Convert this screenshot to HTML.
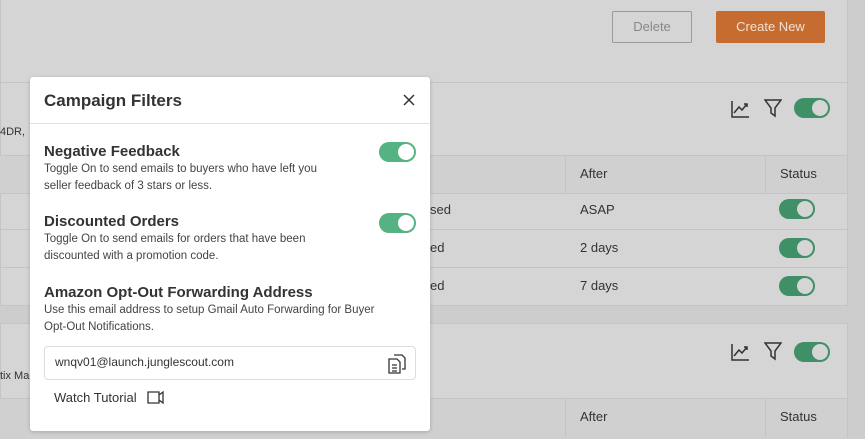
<!DOCTYPE html><html><head><style>
body{margin:0;width:865px;height:433px;background:#cdcdcd;font-family:"Liberation Sans",sans-serif;position:relative;overflow:hidden;color:#333}
.a{position:absolute}
.panel{position:absolute;left:0;width:848px;background:#d5d5d5;border:1px solid #c4c4c4;box-sizing:border-box}
.tg{position:absolute;width:36px;height:20px;border-radius:10px;background:#3f8f67}
.tg:after{content:"";position:absolute;right:2px;top:2px;width:16px;height:16px;border-radius:50%;background:#d5d5d5}
.mt{position:absolute;width:37px;height:20px;border-radius:10px;background:#55b283}
.mt:after{content:"";position:absolute;right:2px;top:2px;width:16px;height:16px;border-radius:50%;background:#fff}
.t{position:absolute;font-size:13px;color:#333}
.h{font-size:15px;font-weight:bold;color:#333;position:absolute}
.s{font-size:11.5px;color:#444;position:absolute;line-height:17px}
</style></head><body>
<div class="panel" style="top:-1px;height:88px"></div>
<div class="a" style="left:612px;top:11px;width:78px;height:30px;border:1px solid #9a9a9a;border-radius:2px;font-size:13px;color:#888;text-align:center;line-height:30px">Delete</div>
<div class="a" style="left:716px;top:11px;width:109px;height:32px;background:#c66c30;border-radius:2px;font-size:13px;color:#f1e0d3;text-align:center;line-height:32px">Create New</div>
<div class="panel" style="top:82px;height:224px"></div>
<div class="a" style="left:0;top:155px;width:847px;height:37px;border-top:1px solid #c4c4c4;border-bottom:1px solid #c4c4c4;background:#d0d0d0"></div>
<div class="a" style="left:565px;top:155px;width:1px;height:38px;background:#c4c4c4"></div>
<div class="a" style="left:765px;top:155px;width:1px;height:38px;background:#c4c4c4"></div>
<div class="a" style="left:0;top:229px;width:847px;height:1px;background:#c4c4c4"></div>
<div class="a" style="left:0;top:267px;width:847px;height:1px;background:#c4c4c4"></div>
<div class="t" style="left:0;top:126px;font-size:11px">4DR,</div>
<div class="t" style="left:580px;top:166px">After</div>
<div class="t" style="left:780px;top:166px">Status</div>
<div class="t" style="left:430px;top:202px">sed</div><div class="t" style="left:580px;top:202px">ASAP</div>
<div class="t" style="left:430px;top:240px">ed</div><div class="t" style="left:580px;top:240px">2 days</div>
<div class="t" style="left:430px;top:278px">ed</div><div class="t" style="left:580px;top:278px">7 days</div>
<div class="tg" style="left:779px;top:199px"></div><div class="tg" style="left:779px;top:238px"></div><div class="tg" style="left:779px;top:276px"></div>
<div class="tg" style="left:794px;top:98px"></div>
<div class="panel" style="top:323px;height:115px"></div>
<div class="a" style="left:0;top:398px;width:847px;height:40px;border-top:1px solid #c4c4c4;background:#d0d0d0"></div>
<div class="a" style="left:565px;top:398px;width:1px;height:40px;background:#c4c4c4"></div>
<div class="a" style="left:765px;top:398px;width:1px;height:40px;background:#c4c4c4"></div>
<div class="t" style="left:580px;top:409px">After</div><div class="t" style="left:780px;top:409px">Status</div>
<div class="t" style="left:0;top:370px;font-size:11px">tix Ma</div>
<div class="tg" style="left:794px;top:342px"></div>
<svg class="a" style="left:730px;top:99px" width="20" height="20" viewBox="0 0 20 20" fill="none" stroke="#333" stroke-width="1.5"><path d="M2 2V18H19M4 14L9 8L12 11L17 5M14 5H17V8"/></svg>
<svg class="a" style="left:764px;top:98px" width="18" height="20" viewBox="0 0 18 20" fill="none" stroke="#333" stroke-width="1.5"><path d="M1 2H17L11 10V18L7 15V10Z"/></svg>
<svg class="a" style="left:730px;top:342px" width="20" height="20" viewBox="0 0 20 20" fill="none" stroke="#333" stroke-width="1.5"><path d="M2 2V18H19M4 14L9 8L12 11L17 5M14 5H17V8"/></svg>
<svg class="a" style="left:764px;top:341px" width="18" height="20" viewBox="0 0 18 20" fill="none" stroke="#333" stroke-width="1.5"><path d="M1 2H17L11 10V18L7 15V10Z"/></svg>

<div class="a" style="left:30px;top:77px;width:400px;height:354px;background:#fff;border-radius:3px;box-shadow:0 1px 4px rgba(0,0,0,.2)"></div>
<div class="a" style="left:30px;top:123px;width:400px;height:1px;background:#e2e2e2"></div>
<div class="h" style="left:44px;top:91px;font-size:17px">Campaign Filters</div>
<svg class="a" style="left:403px;top:94px" width="12" height="12" viewBox="0 0 12 12" stroke="#333" stroke-width="1.5"><path d="M1 1L11 11M11 1L1 11"/></svg>
<div class="h" style="left:44px;top:143px">Negative Feedback</div>
<div class="s" style="left:44px;top:161px">Toggle On to send emails to buyers who have left you<br>seller feedback of 3 stars or less.</div>
<div class="mt" style="left:379px;top:142px"></div>
<div class="h" style="left:44px;top:213px">Discounted Orders</div>
<div class="s" style="left:44px;top:231px">Toggle On to send emails for orders that have been<br>discounted with a promotion code.</div>
<div class="mt" style="left:379px;top:213px"></div>
<div class="h" style="left:44px;top:284px">Amazon Opt-Out Forwarding Address</div>
<div class="s" style="left:44px;top:302px">Use this email address to setup Gmail Auto Forwarding for Buyer<br>Opt-Out Notifications.</div>
<div class="a" style="left:44px;top:346px;width:370px;height:32px;border:1px solid #ddd;border-radius:4px"></div>
<div class="t" style="left:55px;top:355px;font-size:12px">wnqv01@launch.junglescout.com</div>
<svg class="a" style="left:387px;top:353px" width="20" height="22" viewBox="0 0 20 22" fill="none" stroke="#333" stroke-width="1.3"><path d="M7 2H15L18 5V16H15M2 6H10L13 9V20H2Z M5 12H10M5 15H10M5 18H10"/></svg>
<div class="t" style="left:54px;top:390px">Watch Tutorial</div>
<svg class="a" style="left:147px;top:390px" width="17" height="15" viewBox="0 0 17 15" fill="none" stroke="#333" stroke-width="1.3"><path d="M1 2H12V13H1ZM12 5L16 2V13L12 10"/></svg>
</body></html>
